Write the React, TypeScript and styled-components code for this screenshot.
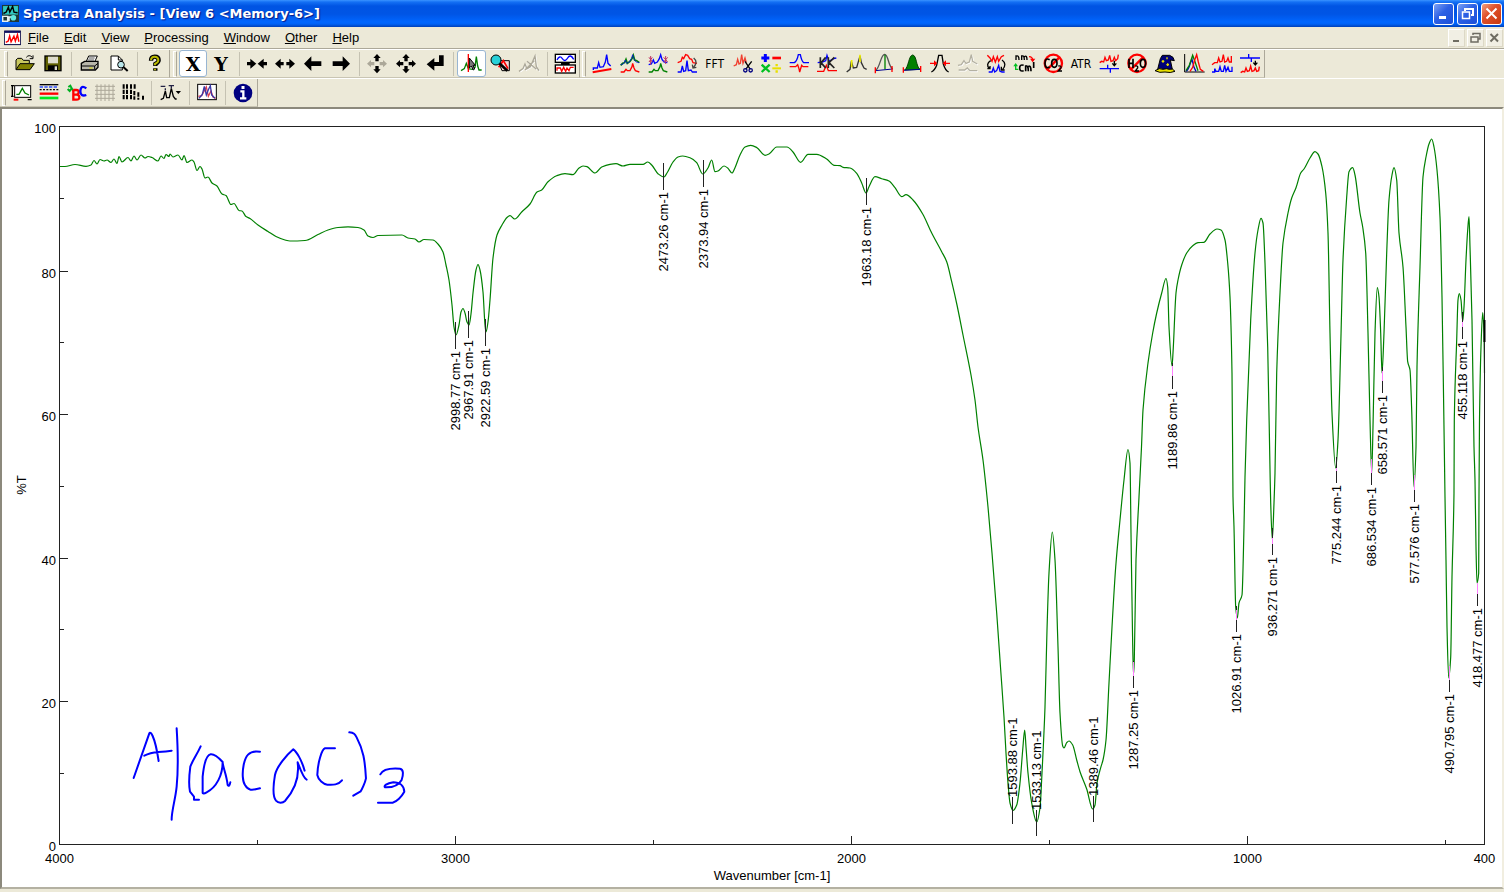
import React from "react";
import styled, { createGlobalStyle } from "styled-components";

const FACE = "#ece9d8";
const SANS = '"Liberation Sans", Arial, sans-serif';

const GlobalStyle = createGlobalStyle`
  *, *::before, *::after { box-sizing: border-box; }
  body { margin: 0; background: ${FACE}; font-family: ${SANS}; font-size: 13px; color: #000; }
  button { font: inherit; color: inherit; }
`;

const AppWindow = styled.main`
  display: flex;
  flex-direction: column;
  padding-bottom: 3px;
  background: ${FACE};
`;

const TitleBar = styled.header`
  display: flex;
  align-items: center;
  gap: 4px;
  height: 27px;
  padding: 0 2px;
  background: linear-gradient(#3a93ff 0, #1470f4 2px, #0054e3 6px, #0055e5 14px, #0066ff 22px, #0062f6 24px, #0040b8 27px);
`;

const WindowTitle = styled.h1`
  flex: 1;
  margin: 0;
  font: bold 13px/20px "DejaVu Sans", Verdana, sans-serif;
  color: #fff;
  text-shadow: 1px 1px 1px #0a1883;
`;

const CaptionButtons = styled.div`
  display: flex;
  gap: 3px;
`;

const CaptionButton = styled.button<{ $close?: boolean }>`
  display: grid;
  place-items: center;
  width: 21px;
  height: 22px;
  padding: 0;
  border: 1px solid #fff;
  border-radius: 3px;
  background: ${(p) =>
    p.$close
      ? "linear-gradient(135deg, #f0a080, #e0522c 40%, #c8390f)"
      : "linear-gradient(135deg, #7da2f5, #2c60e4 45%, #1c4fd8)"};
`;

const MenuBar = styled.nav`
  display: flex;
  align-items: center;
  height: 22px;
  padding: 0 1px 0 4px;
  border-bottom: 1px solid #aca899;
`;

const MenuItems = styled.div`
  display: flex;
  flex: 1;
  gap: 15px;
  padding-left: 7px;
`;

const MenuItem = styled.button`
  padding: 0;
  border: 0;
  background: none;
  line-height: 18px;
`;

const ChildButtons = styled.div`
  display: flex;
  gap: 2px;
`;

const ChildButton = styled.button`
  display: grid;
  place-items: center;
  width: 17px;
  height: 18px;
  padding: 0;
  border: 1px solid #fff;
  border-color: #fff #dcd8c6 #dcd8c6 #fff;
  background: #f1efe4;
`;

const ToolRow = styled.div`
  display: flex;
  align-items: center;
  height: 29px;
  border-top: 1px solid #fff;
`;

const ToolBar = styled.div`
  display: flex;
  align-items: center;
  height: 28px;
  border-right: 1px solid #aca899;
  border-bottom: 1px solid #c9c5b3;
`;

const Grip = styled.span<{ $width: number }>`
  display: flex;
  justify-content: center;
  width: ${(p) => p.$width}px;
  height: 26px;
  &::before {
    content: "";
    width: 4px;
    border: 1px solid #fff;
    border-right-color: #aca899;
  }
`;

const Separator = styled.span`
  width: 1px;
  height: 24px;
  margin: 0 3px 0 4px;
  background: #c5c2b2;
`;

const Group = styled.div<{ $count: number; $width: number }>`
  display: grid;
  grid-template-columns: repeat(${(p) => p.$count}, 1fr);
  width: ${(p) => p.$width}px;
`;

const ToolButton = styled.button<{ $pressed?: boolean }>`
  display: grid;
  place-items: center;
  height: 27px;
  padding: 0;
  border: 1px solid ${(p) => (p.$pressed ? "#98b5d2" : "transparent")};
  border-radius: 3px;
  background: ${(p) => (p.$pressed ? "#fff" : "none")};
`;

const Glyph = styled.svg`
  display: block;
  width: 20px;
  height: 20px;
  overflow: visible;
  fill: none;
  stroke-width: 4;
`;

const AxisLetter = styled.span`
  font: bold 19px/20px "DejaVu Serif", serif;
`;

const TextIcon = styled.span`
  font: 12px/20px "DejaVu Sans Condensed", "Liberation Sans Narrow", sans-serif;
`;

const Pane = styled.section`
  border: 2px solid #8c897c;
  border-right: 2px solid #f1eee0;
  border-bottom: 2px solid #b4b1a2;
  background: #fff;
`;

const Chart = styled.svg`
  display: block;
  width: 100%;
  height: auto;
  font: 13px ${SANS};
`;

/* ---------- toolbar drawings, on a 60 x 60 grid ---------- */

const K = "#000";
const R = "#ff0000";
const B = "#0000ff";
const G = "#008000";

const PEAKS_TOP = "M2 32 L10 30 L16 18 L20 28 L28 24 L34 14 L38 2 L42 16 L48 24 L58 26";
const PEAKS_LOW = "M2 54 L12 54 L18 46 L22 50 L30 50 L36 38 L38 28 L42 42 L46 50 L58 54";
const NOISE_TOP = "M2 26 L8 22 L14 24 L18 10 L22 20 L28 18 L32 4 L36 22 L42 20 L46 10 L50 20 L56 14 L58 2";
const NOISE_LOW = "M2 56 L8 52 L14 54 L18 42 L22 52 L28 50 L32 36 L36 52 L42 50 L46 42 L50 52 L56 50 L58 38";
const UP = "M30 0 L41 12 H35 V22 H25 V12 H19Z";
const DOWN = "M30 58 L41 46 H35 V36 H25 V46 H19Z";
const LEFT = "M0 29 L12 18 V24 H22 V34 H12 V40Z";
const RIGHT = "M60 29 L48 18 V24 H38 V34 H48 V40Z";

const drawings: Record<string, React.ReactNode> = {
  open: (
    <>
      <path d="M3 46 V18 L8 13 H20 L25 19 H43 V28" fill="#c8c860" stroke={K} strokeWidth="3" />
      <path d="M3 47 L15 29 H58 L45 47Z" fill="#808000" stroke={K} strokeWidth="3" />
      <path d="M34 10 Q42 0 52 10 M54 4 V14 H44" stroke={K} strokeWidth="3" />
    </>
  ),
  save: (
    <>
      <rect x="6" y="6" width="48" height="44" fill="#606000" stroke={K} />
      <rect x="15" y="8" width="30" height="20" fill="#dedccc" />
      <rect x="15" y="34" width="30" height="15" fill={K} />
      <rect x="35" y="37" width="7" height="11" fill="#dedccc" />
    </>
  ),
  print: (
    <>
      <path d="M18 24 L26 6 H52 L44 24Z" fill="#fff" stroke={K} strokeWidth="3" />
      <path d="M26 12 H44 M23 18 H42" stroke={K} strokeWidth="2" />
      <path d="M4 28 L14 22 H54 V40 L46 48 H4Z" fill="#b8b6aa" stroke={K} strokeWidth="4" />
      <path d="M4 36 H44 L54 28 M44 36 V46" stroke={K} strokeWidth="3" />
      <path d="M28 42 H38" stroke="#d8d800" strokeWidth="3" />
    </>
  ),
  preview: (
    <>
      <path d="M6 6 H28 L40 18 V48 H6Z" fill="#fff" stroke={K} strokeWidth="3" />
      <path d="M28 6 V18 H40" stroke={K} strokeWidth="3" />
      <circle cx="36" cy="32" r="10" fill="#b9e6ea" stroke={K} strokeWidth="3" />
      <path d="M43 39 L56 51" stroke={K} strokeWidth="6" />
    </>
  ),
  help: (
    <>
      <path d="M18 20 Q18 8 29 8 Q41 8 41 19 Q41 25 31 30 V36 M31 43 V50" stroke={K} strokeWidth="13" />
      <path d="M18 19 Q18 8 29 8 Q40 8 40 19 Q40 25 30 30 V34 M30 44 V49" stroke="#b8b800" strokeWidth="6" />
    </>
  ),
  squeezeX: <path fill={K} d="M0 24 H10 V14 L28 29 L10 44 V34 H0Z M60 24 H50 V14 L32 29 L50 44 V34 H60Z" />,
  stretchX: <path fill={K} d="M0 29 L17 14 V24 H26 V34 H17 V44Z M60 29 L43 14 V24 H34 V34 H43 V44Z" />,
  left: <path fill={K} d="M3 29 L25 7 V22 H55 V36 H25 V51Z" />,
  right: <path fill={K} d="M57 29 L35 7 V22 H5 V36 H35 V51Z" />,
  panY: (
    <>
      <path fill="#aca899" d={LEFT + RIGHT} />
      <path fill={K} d={UP + DOWN} />
    </>
  ),
  panAll: <path fill={K} d={UP + DOWN + LEFT + RIGHT} />,
  enter: <path fill={K} d="M56 4 V36 H28 V50 L5 31 L28 12 V24 H42 V4Z" />,
  pick: (
    <>
      <path d="M0 50 L10 44 L16 28 L22 44 L34 46 L42 40 L46 8 L50 36 L54 48 H62" stroke={G} />
      <path d="M22 0 V54" stroke={R} />
      <path d="M25 12 V42 L31 36 L37 48 L41 45 L36 34 H43Z" fill="#777" stroke={K} strokeWidth="3" />
    </>
  ),
  zoomArea: (
    <>
      <path d="M24 20 H58 V50 H36Z" fill="#f4d8d8" stroke={K} strokeWidth="3" />
      <path d="M26 40 L40 20 L54 44" stroke={R} strokeWidth="5" />
      <path d="M28 28 L52 50" stroke={K} strokeWidth="8" />
      <circle cx="18" cy="18" r="15" fill="#28d0d8" stroke={K} strokeWidth="3" />
    </>
  ),
  pickOff: (
    <>
      <path d="M4 54 L14 46 L20 32 L26 46 L36 40 L50 8 L54 40 L62 52 M20 50 L48 22 M26 24 L54 48" stroke="#fff" />
      <path d="M0 52 L12 44 L18 30 L24 44 L34 38 L48 6 L52 38 L60 50 M18 48 L46 20 M24 22 L52 46" stroke="#aca899" />
    </>
  ),
  split: (
    <>
      <rect x="1" y="1" width="60" height="24" fill="#fff" stroke={K} />
      <rect x="1" y="33" width="60" height="24" fill="#fff" stroke={K} />
      <path d="M18 25 H44 V33 H18Z" fill={K} />
      <path d="M6 18 Q14 2 22 14 T38 12 T56 16" stroke={B} />
      <path d="M6 50 V42 H16 L20 52 L26 40 L32 52 L36 42 L42 50 L46 40 H56" stroke={R} />
    </>
  ),
  baseline: (
    <>
      <path d="M4 48 V42 H16 L20 26 L24 40 L34 38 L40 24 L44 2 L48 28 L56 36" stroke={B} />
      <path d="M2 55 L58 45" stroke={R} strokeWidth="6" />
    </>
  ),
  smooth: (
    <>
      <path d="M2 34 L8 28 L14 26 L18 16 L22 28 L30 22 L36 14 L40 4 L44 18 L50 20 L58 26" stroke={G} strokeWidth="5" />
      <path d={PEAKS_TOP} stroke={B} strokeWidth="2" />
      <path d={PEAKS_LOW} stroke={R} />
    </>
  ),
  truncate: (
    <>
      <path d={PEAKS_TOP} stroke={B} />
      <path d="M3 10 L13 24 M13 10 L3 24 M8 6 V32 M47 10 L59 24 M59 10 L47 24 M53 6 V30" stroke="#c03060" strokeWidth="3" />
      <path d={PEAKS_LOW} stroke={G} />
    </>
  ),
  convert: (
    <>
      <path d="M2 26 L12 22 L16 10 L20 14 L26 2 L32 4 L38 14 L44 16 L48 26 L60 28" stroke={R} />
      <path d="M50 12 Q64 24 50 40 M46 32 L48 42 L58 40" stroke="#444" />
      <path d="M2 54 H12 L16 36 L20 52 L26 50 L30 20 L34 50 L42 48 L46 54 H60" stroke={B} />
    </>
  ),
  cut: (
    <>
      <path d="M2 36 L10 32 L14 16 L18 30 L22 28 L26 2 L30 28 L36 12 L40 26" stroke="#f04030" />
      <path d="M36 22 L52 46 M56 22 L38 46" stroke={K} />
      <circle cx="37" cy="49" r="5" stroke="#000080" />
      <circle cx="53" cy="49" r="5" stroke="#000080" />
    </>
  ),
  math: (
    <>
      <path d="M13 0 V24 M1 12 H25" stroke={B} strokeWidth="9" />
      <path d="M34 12 H60" stroke={R} strokeWidth="8" />
      <path d="M2 32 L26 54 M26 32 L2 54" stroke="#00c020" strokeWidth="7" />
      <path d="M34 43 H60" stroke="#e8e000" strokeWidth="6" />
      <path d="M47 30 V37 M47 49 V56" stroke="#e8e000" strokeWidth="7" />
    </>
  ),
  derive: (
    <>
      <path d="M2 26 H16 Q24 22 28 2 H34 Q38 22 44 26 H60" stroke={B} />
      <path d="M2 38 H20 L26 32 L30 44 L32 54 L38 34 L42 38 H58" stroke={R} />
    </>
  ),
  kk: (
    <>
      <path d="M2 26 L16 24 L26 20 L30 4 L36 22 L50 14 L58 12" stroke={B} />
      <path d="M0 52 H20 L28 34 L34 50 H60" stroke={R} />
      <path d="M10 10 V42 M26 10 L12 26 L26 42 M34 10 V42 M52 10 L36 26 L52 42" stroke="#222" strokeWidth="5" />
    </>
  ),
  peakFind: (
    <>
      <path d="M2 54 L12 46 L16 22 L22 42 L32 40 L38 20 L42 6 L46 26 L54 42 L62 46" stroke="#333" />
      <path d="M17 18 V40 M42 2 V24" stroke="#f0f000" strokeWidth="5" />
    </>
  ),
  peakHeight: (
    <>
      <path d="M6 48 C18 40 20 2 32 1 C44 2 42 38 56 44" stroke="#555" />
      <path d="M33 2 V46" stroke={G} />
      <path d="M4 50 L56 45" stroke="#000090" strokeWidth="3" />
      <path d="M4 40 V58 M54 36 V54" stroke={R} />
    </>
  ),
  peakArea: (
    <>
      <path d="M8 48 C20 40 20 4 32 3 C44 4 42 38 54 46Z" fill={G} stroke="#004000" strokeWidth="3" />
      <path d="M4 49 L56 46" stroke="#000090" strokeWidth="3" />
      <path d="M4 40 V56 M56 36 V54" stroke={R} />
    </>
  ),
  fwhm: (
    <>
      <path d="M4 54 Q14 50 20 34 L26 4 H36 L40 30 Q46 50 56 54" stroke={K} />
      <path d="M0 28 H14 M60 28 H46" stroke={R} />
      <path d="M12 19 L22 28 L12 37Z M48 19 L38 28 L48 37Z" fill={R} />
    </>
  ),
  ghost: (
    <>
      <path d="M2 36 L12 34 L20 22 L26 30 L36 26 L42 4 L46 24 L60 32 M4 50 H22 L30 44 L38 52 H60" stroke="#fff" strokeWidth="5" />
      <path d="M0 34 L10 32 L18 20 L24 28 L34 24 L40 2 L44 22 L58 30 M2 48 H20 L28 42 L36 50 H58" stroke="#b4b1a2" />
    </>
  ),
  swap: (
    <>
      <path d="M4 4 L12 12 L18 22 L22 8 L28 24 L34 8 L38 22 L46 8 L54 4" stroke={R} />
      <path d="M8 54 H18 L22 42 L26 54 L32 50 L38 34 L42 52 L48 54 H56" stroke={B} />
      <path d="M14 20 Q-2 30 10 44 M4 44 H12 V36 M48 18 Q64 30 50 46 M46 38 V48 H56" stroke={K} />
    </>
  ),
  units: (
    <>
      <path d="M3 18 V4 M3 7 Q12 2 12 18 M20 18 V4 M20 7 Q28 2 28 18 M28 8 Q36 2 36 18" stroke={K} />
      <path d="M42 8 Q53 8 53 20" stroke={R} />
      <path d="M45 14 H61 L53 25Z" fill={R} />
      <path d="M2 34 V46 H10" stroke="#00c020" />
      <path d="M-5 37 H9 L2 27Z" fill="#00c020" />
      <path d="M26 34 Q14 30 14 42 Q14 54 26 50 M32 52 V34 M32 37 Q40 32 40 52 M40 38 Q48 32 48 52 M56 24 V42" stroke={K} strokeWidth="5" />
    </>
  ),
  co2: (
    <>
      <circle cx="31" cy="28" r="26" stroke={R} strokeWidth="7" />
      <path d="M49 10 L13 46" stroke={R} strokeWidth="7" />
      <path d="M20 17 Q6 10 6 28 Q6 46 20 39" stroke={K} strokeWidth="5" />
      <ellipse cx="34" cy="28" rx="8" ry="12" stroke={K} strokeWidth="5" />
      <path d="M46 36 Q56 34 54 42 L46 51 H57" stroke={K} />
    </>
  ),
  subtract: (
    <>
      <path d={NOISE_TOP} stroke={R} />
      <path d="M2 44 H26 V32 M34 56 V44 H60 M26 44 H34" stroke={B} />
      <path d="M46 20 V34 M40 28 L46 35 L52 28" stroke={K} />
    </>
  ),
  h2o: (
    <>
      <circle cx="30" cy="28" r="26" stroke={R} strokeWidth="7" />
      <path d="M48 10 L12 46" stroke={R} strokeWidth="7" />
      <path d="M6 14 V42 M18 14 V42 M6 28 H18" stroke={K} strokeWidth="5" />
      <ellipse cx="48" cy="28" rx="8" ry="12" stroke={K} strokeWidth="5" />
      <path d="M25 36 Q34 34 32 42 L25 51 H36" stroke={K} />
    </>
  ),
  wizard: (
    <>
      <path d="M8 46 L16 14 L22 4 H44 L54 10 L58 20 L46 18 L52 46Z" fill="#000078" stroke={K} strokeWidth="3" />
      <path d="M0 50 Q14 40 24 46 Q36 42 42 46 Q54 42 60 52 Q46 58 30 54 Q14 58 0 50Z" fill="#e8e000" stroke={K} strokeWidth="3" />
      <path d="M24 18 V26 M20 22 H28 M38 28 V36 M34 32 H42 M36 10 V16" stroke="#e8e000" />
    </>
  ),
  overlay: (
    <>
      <path d="M2 0 V54 H62" stroke={K} strokeWidth="3" />
      <path d="M6 52 Q14 46 18 30 L24 16 L30 40 L36 52" stroke="#0000c0" />
      <path d="M6 50 L16 34 L26 4 L32 20 L42 50" stroke={G} />
      <path d="M18 52 L26 40 L32 18 L38 2 L43 24 L49 46 L58 52" stroke={R} />
    </>
  ),
  stack: (
    <>
      <path d="M0 32 L8 26 H16 L20 12 L24 24 L30 22 L34 2 L38 24 L44 22 L48 12 L52 24 H58 V6" stroke={R} />
      <path d="M0 54 H8 V44 L12 52 H20 L24 38 L28 52 H34 L38 34 L42 52 L48 40 L52 52 H60 V38" stroke={B} />
    </>
  ),
  correct: (
    <>
      <path d="M0 12 H26 V0 M34 24 V12 H60 M26 12 H34" stroke={B} />
      <path d="M46 20 V32 M40 26 L46 33 L52 26" stroke={K} />
      <path d={NOISE_LOW} stroke={R} />
    </>
  ),
  scale: (
    <>
      <rect x="11" y="8" width="48" height="35" fill="#fff" stroke={K} strokeWidth="3" />
      <path d="M16 34 L24 34 L34 16 L42 30 L54 36" stroke={G} />
      <path d="M0 8 H10 M4 8 V40 M0 40 H8 M50 50 H62" stroke={K} />
      <path d="M8 50 H22" stroke={R} strokeWidth="6" />
    </>
  ),
  lineStyle: (
    <>
      <path d="M2 5 H58" stroke={K} />
      <path d="M2 12 H58" stroke="#3050ff" strokeDasharray="10 4" />
      <path d="M2 20 H58" stroke={K} strokeDasharray="6 4" />
      <path d="M2 32 H58" stroke={R} strokeWidth="7" />
      <path d="M2 45 H58" stroke="#00e820" strokeWidth="8" />
    </>
  ),
  fonts: (
    <>
      <path d="M4 12 L10 8 L14 16 L8 24 L2 18 M14 16 L20 24" stroke="#00b020" strokeWidth="6" />
      <path d="M19 20 V50 H28 Q38 50 37 42 Q36 35 28 35 H20 M19 21 H28 Q36 21 35 28 Q34 35 28 35" stroke={R} strokeWidth="7" />
      <path d="M58 16 Q42 4 40 24 Q40 42 58 36" stroke={B} strokeWidth="7" />
    </>
  ),
  grid: <path d="M6 4 V54 M18 4 V54 M30 4 V54 M42 4 V54 M54 4 V54 M0 10 H60 M0 22 H60 M0 34 H60 M0 46 H60" stroke="#aca899" strokeWidth="3" />,
  bars: (
    <path d="M2 4 V50 M12 4 V50 M24 4 V50 M35 4 V18 M34 24 V50 M46 28 V50 M60 38 V50" stroke={K} strokeWidth="6" strokeDasharray="13 3" />
  ),
  peakMenu: (
    <>
      <path d="M2 50 L10 46 L16 24 L20 44 L28 44 L34 16 L40 40 L46 48 H50" stroke={K} />
      <path d="M2 10 H16 M26 8 H42 M16 16 V22 M34 10 V16" stroke="#224" strokeWidth="4" />
      <path d="M47 24 H63 L55 33Z" fill={K} />
    </>
  ),
  viewPeaks: (
    <>
      <rect x="2" y="4" width="56" height="46" fill="#fff" stroke={K} strokeWidth="3" />
      <path d="M4 40 L14 38 L28 12 L34 40 L42 24 L48 42 L56 46" stroke="#e04050" />
      <path d="M6 46 L16 34 L22 10 L28 36 L34 20 L40 8 L44 36 L54 46" stroke="#3838a8" />
    </>
  ),
  info: (
    <>
      <circle cx="30" cy="30" r="28" fill="#000080" />
      <path d="M30 9 V18" stroke="#fff" strokeWidth="9" />
      <path d="M22 25 H31 V44 M21 46 H40" stroke="#fff" strokeWidth="7" />
    </>
  ),
};

type Tool = { id: string; label: string; text?: string; letter?: string; pressed?: boolean };

const t = (id: string, label: string): Tool => ({ id, label });

const fileTools = [t("open", "Open"), t("save", "Save")];
const printTools = [t("print", "Print"), t("preview", "Print preview")];
const helpTools = [t("help", "Help")];
const axisTools: Tool[] = [
  { id: "x", label: "X axis", letter: "X", pressed: true },
  { id: "y", label: "Y axis", letter: "Y" },
];
const rangeTools = [t("squeezeX", "Compress"), t("stretchX", "Expand"), t("left", "Move left"), t("right", "Move right")];
const panTools = [t("panY", "Vertical pan"), t("panAll", "Auto scale"), t("enter", "Previous scale")];
const pickTools: Tool[] = [{ id: "pick", label: "Cursor", pressed: true }, t("zoomArea", "Zoom"), t("pickOff", "Edit peak")];
const splitTools = [t("split", "Split view")];
const processTools: Tool[] = [
  t("baseline", "Baseline"),
  t("smooth", "Smoothing"),
  t("truncate", "Deresolution"),
  t("convert", "Y conversion"),
  { id: "fft", label: "FFT", text: "FFT" },
  t("cut", "Cut"),
  t("math", "Arithmetic"),
  t("derive", "Derivatives"),
  t("kk", "Kramers-Kronig"),
  t("peakFind", "Peak find"),
  t("peakHeight", "Peak height"),
  t("peakArea", "Peak area"),
  t("fwhm", "Peak width"),
  t("ghost", "Peak process"),
  t("swap", "Exchange"),
  t("units", "Unit conversion"),
  t("co2", "CO2 reduction"),
  { id: "atr", label: "ATR", text: "ATR" },
  t("subtract", "Subtraction"),
  t("h2o", "H2O reduction"),
  t("wizard", "Wizard"),
  t("overlay", "Overlay"),
  t("stack", "Stack"),
  t("correct", "Correction"),
];
const styleTools = [t("scale", "Scale"), t("lineStyle", "Line style"), t("fonts", "Font"), t("grid", "Grid"), t("bars", "Pattern")];

function Tools({ items, width }: { items: Tool[]; width: number }) {
  return (
    <Group $count={items.length} $width={width}>
      {items.map((item) => (
        <ToolButton key={item.id} type="button" aria-label={item.label} $pressed={item.pressed}>
          {item.letter ? (
            <AxisLetter>{item.letter}</AxisLetter>
          ) : item.text ? (
            <TextIcon>{item.text}</TextIcon>
          ) : (
            <Glyph viewBox="0 0 60 60" aria-hidden="true">{drawings[item.id]}</Glyph>
          )}
        </ToolButton>
      ))}
    </Group>
  );
}

/* ---------- spectrum ---------- */

const spectrum =
  "60,166.5 65,166.5 75,164.5 86,166.3 91,165 94,160.5 97,164 100,159.5 104,161 107,160 111,162.5 114,159 117,163.5 119,156.5 122,162 128,157.5 131,161 134,156 137,160 141,155 145,158 148,156.5 152,157.5 158,161 161,156 164,158.5 166,154.5 169,156.5 170,154 173,157 178,155 182,160 184,155.5 187,162.5 192,160 194,162 197,170.5 200,166.5 202,169 205,178 208,177 212,183 217,186 222,194 226,195.5 231,204.5 234,203.5 239,210.5 242,211 246,216.5 250,218.5 258,225 268,231.5 276,236.5 285,240 290,241 305,240.5 318,234.5 328,230 338,227.5 348,226.8 358,227.5 364,230 368,236 373,237.5 378,235.5 402,235 408,238 415,239 419,242 424,239.5 433,240 438,244 443,252 446,265 449,280 452,305 454,327 456,335 459,325 461,312 463,308.5 465,313 467,322 469,325 471,314 473,293 476,270 478,264.5 480,270 483,292 485,325 486,332 488,322 490,300 493,258 497,235 502,225 507,217.5 510,215.7 514.7,219 521.7,212 530,204 537,192 541.7,190 548,181.7 556.7,175.7 565,173.7 573,174.7 579,168 583,166 587,166.7 595,173 601.7,167 610,164.3 616,163.7 623,166 630,164.3 643,164.3 647.7,162 651.7,165 658,173.7 664,177 667,173 673,162 678,157 682.7,156 690,157.7 696.7,162.7 702.7,174 708,168 711.7,160 715,171.7 718,171 724,166 727.7,168 732,173 735,167.7 740,155 745,147 750.7,145.3 757,147.7 765,155.3 769,154 776.7,147 787,147 793,152 800.7,162.3 808,154.3 816.7,154.3 826.7,159 834,165.3 840,165.7 843,167.3 850,168 856.7,173.3 861.7,183 866,193 869,186.7 875,176.7 881.7,178.7 889,181 895,187.7 901.7,196.7 906,194.7 913,200 922.7,214 931.7,233 941.7,251.7 946.7,261.7 951.7,281.7 957,305 963,335 971,375 975,400 978,427 983,460 988,507 992,553 996.7,613 1000.7,670 1004,717 1006,753 1008,783 1010,803 1013,810.5 1016.7,805 1020,783 1022.7,750 1024.7,730 1026,747 1028,773 1031.7,803 1036.7,822 1040,808 1042,773 1045,707 1047,630 1049,573 1052.3,532 1055,560 1058,647 1060,713 1062.7,746 1064,748 1066.7,742.7 1069,741 1072.7,745 1076.7,760 1080,771.7 1086.7,789 1092.7,809 1095,805 1097,783 1101,766.7 1103,760 1106,740 1109,683 1112,627 1115.7,567 1120,520 1124,480 1128,449.5 1130,463 1131,533 1132.5,633 1133.5,675 1134.3,660 1136,560 1139,497 1141.5,447 1143,410 1148,363 1152.7,333 1156.7,313 1161.7,293 1166,278.5 1167.7,287 1169,327 1172,366 1173,353 1176,293 1178,280 1181.7,265 1186.7,253 1192.7,245.7 1198,242.7 1204,242.3 1210,234 1217,229 1221,230 1225,240 1227.7,263 1230,297 1232,373 1233,497 1234,527 1235.7,607 1237.3,618 1239,603 1242,595 1244,527 1245,477 1246.7,420 1250.7,320 1255,253 1258,230 1261,218.3 1263,223 1265,263 1267.7,347 1270.2,480 1270.7,503 1272.3,539 1274,503 1275,473 1276.7,373 1280,293 1283,243 1288,213 1291.7,198 1296,187.7 1300.7,173 1304,169 1310,158 1315,151.7 1318,154 1322,166.7 1325.7,193 1328,233 1330,333 1332,413 1335.7,468 1338,440 1340.7,347 1343,260 1346.7,197 1349,171.7 1352.7,167.7 1355,175 1360,213 1362.7,227 1365.7,253 1368,333 1370,420 1371.7,473 1373,427 1375,333 1377.3,287.7 1379,297 1380.7,333 1382,373 1384,333 1386.7,253 1389,200 1392,175 1394,167.7 1396.7,180 1399,233 1403,267 1406,327 1407.7,361.7 1410,370 1411.7,410 1414,487 1416,447 1417,367 1420,267 1423,177 1426,157 1429,144 1431.7,139 1434,147 1437,170 1440,217 1442,297 1443.7,407 1445,497 1446,560 1447,627 1448.7,678 1450.7,657 1452,577 1454,493 1454.3,420 1456.7,340 1458,300 1459.3,293.7 1461,300 1462.7,321 1464,307 1466,260 1467.7,230 1469,216.7 1470,247 1472,320 1474,447 1475,480 1476,547 1477,583 1478.7,573 1479,493 1479.5,420 1481,347 1482.7,312.7 1484,333 1484.5,373";

/* Monotone cubic interpolation: smooth between samples, with no overshoot at a peak. */
function smoothPath(points: string): string {
  const p = points.split(" ").map((pair) => pair.split(",").map(Number));
  const n = p.length;
  const slope = (i: number) => (p[i + 1][1] - p[i][1]) / (p[i + 1][0] - p[i][0]);
  const tangent = p.map((_, i) => {
    if (i === 0) return slope(0);
    if (i === n - 1) return slope(n - 2);
    const a = slope(i - 1);
    const b = slope(i);
    return a * b <= 0 ? 0 : (2 * a * b) / (a + b);
  });
  let d = `M${p[0][0]} ${p[0][1]}`;
  for (let i = 0; i < n - 1; i++) {
    const h = (p[i + 1][0] - p[i][0]) / 3;
    const c1 = [p[i][0] + h, p[i][1] + tangent[i] * h];
    const c2 = [p[i + 1][0] - h, p[i + 1][1] - tangent[i + 1] * h];
    d += `C${c1.map((v) => v.toFixed(2)).join(" ")} ${c2.map((v) => v.toFixed(2)).join(" ")} ${p[i + 1].join(" ")}`;
  }
  return d;
}

const spectrumPath = smoothPath(spectrum);

type Peak = { label: string; x: number; top: number; bottom: number; pink?: [number, number]; above?: boolean };

const peaks: Peak[] = [
  { label: "2998.77", x: 455.5, top: 322, bottom: 349 },
  { label: "2967.91", x: 468.5, top: 311, bottom: 338 },
  { label: "2922.59", x: 485.5, top: 319, bottom: 346 },
  { label: "2473.26", x: 663.5, top: 163, bottom: 190 },
  { label: "2373.94", x: 703.5, top: 160, bottom: 187 },
  { label: "1963.18", x: 866.5, top: 178, bottom: 205 },
  { label: "1593.88", x: 1012.5, top: 797, bottom: 824, above: true },
  { label: "1533.13", x: 1036.5, top: 810, bottom: 836, above: true },
  { label: "1389.46", x: 1093.5, top: 796, bottom: 822, above: true },
  { label: "1287.25", x: 1133.5, top: 661, bottom: 688, pink: [662, 676] },
  { label: "1189.86", x: 1172.5, top: 363, bottom: 389, pink: [366, 376] },
  { label: "1026.91", x: 1236.5, top: 606, bottom: 632, pink: [610, 620] },
  { label: "936.271", x: 1272.5, top: 528, bottom: 555, pink: [538, 544] },
  { label: "775.244", x: 1336.5, top: 457, bottom: 483, pink: [468, 471] },
  { label: "686.534", x: 1371.5, top: 459, bottom: 485, pink: [459, 473] },
  { label: "658.571", x: 1382.5, top: 367, bottom: 393, pink: [371, 381] },
  { label: "577.576", x: 1414.5, top: 475, bottom: 502, pink: [475, 490] },
  { label: "455.118", x: 1462.5, top: 312, bottom: 339, pink: [322, 327] },
  { label: "490.795", x: 1449.5, top: 666, bottom: 692, pink: [666, 680] },
  { label: "418.477", x: 1477.5, top: 583, bottom: 606, pink: [583, 594] },
];

const yTicks = [
  { value: 100, y: 126.5 },
  { value: 80, y: 271.5 },
  { value: 60, y: 414.5 },
  { value: 40, y: 558.5 },
  { value: 20, y: 701.5 },
  { value: 0, y: 844.5 },
];

const xTicks = [
  { value: 4000, x: 59.5 },
  { value: 3000, x: 455.5 },
  { value: 2000, x: 851.5 },
  { value: 1000, x: 1247.5 },
  { value: 400, x: 1484.5 },
];

function PeakMark({ peak }: { peak: Peak }) {
  const labelX = peak.x + 4;
  const labelY = peak.above ? peak.top : peak.bottom + 2;
  return (
    <g>
      <path d={`M${peak.x} ${peak.top} V${peak.bottom}`} stroke="#222" />
      {peak.pink && <path d={`M${peak.x} ${peak.pink[0]} V${peak.pink[1]}`} stroke="#ff80ff" />}
      <text transform={`translate(${labelX} ${labelY}) rotate(-90)`} textAnchor={peak.above ? "start" : "end"}>
        {peak.label} cm-1
      </text>
    </g>
  );
}

function SpectrumChart() {
  return (
    <Chart viewBox="2 109 1500 778" role="img" aria-label="Infrared transmittance spectrum">
      <path d={spectrumPath} fill="none" stroke="#008000" strokeWidth="1.2" strokeLinejoin="round" />
      <rect x="59.5" y="126.5" width="1425" height="718" fill="none" stroke="#222" />
      <path
        d="M60 198.5 h4 M60 342.5 h4 M60 486.5 h4 M60 629.5 h4 M60 773.5 h4 M257.5 844 v-4 M653.5 844 v-4 M1049.5 844 v-4 M1445.5 844 v-4"
        stroke="#222"
      />
      {yTicks.map(({ value, y }) => (
        <g key={value}>
          <path d={`M60 ${y} h8`} stroke="#222" />
          <text x="56" y={y + 6} textAnchor="end">{value}</text>
        </g>
      ))}
      {xTicks.map(({ value, x }) => (
        <g key={value}>
          <path d={`M${x} 844 v-8`} stroke="#222" />
          <text x={x} y="863" textAnchor="middle">{value}</text>
        </g>
      ))}
      <path d="M1484.5 320 V342" stroke="#000" strokeWidth="2" />
      <text x="772" y="880" textAnchor="middle">Wavenumber [cm-1]</text>
      <text transform="translate(26 485) rotate(-90)" textAnchor="middle">%T</text>
      {peaks.map((peak) => (
        <PeakMark key={peak.label} peak={peak} />
      ))}
      <g
        transform="translate(0 700) scale(0.3333)"
        fill="none"
        stroke="#0000ff"
        strokeWidth="6"
        strokeLinecap="round"
        strokeLinejoin="round"
      >
        <path d="M401 234 L448 100 Q452 94 458 108 Q468 130 476 183 M433 167 Q450 158 475 156 T515 152" />
        <path d="M530 85 C534 150 534 220 530 260 C526 300 515 330 515 359" />
        <path d="M602 139 C590 165 576 185 571 200 C567 230 567 260 570 275 L582 290 V299 H597" />
        <path d="M668 186 C655 172 640 162 632 163 C620 165 612 190 608 230 V278 Q608 284 620 277 C650 262 668 225 668 186 C668 200 680 225 683 255 Q688 262 691 247" />
        <path d="M780 155 C745 150 736 170 731 195 C726 220 728 245 735 255 C745 272 755 272 780 265" />
        <path d="M914 212 C905 180 890 155 880 148 C860 165 830 200 825 225 C820 255 818 290 828 302 C835 310 848 310 855 303 C880 275 900 240 893 187 C900 205 910 235 920 239" />
        <path d="M1005 145 H975 C965 148 953 190 952 225 C955 240 970 253 982 254 C1000 255 1015 255 1026 241" />
        <path d="M1048 97 C1062 98 1065 102 1070 112 C1090 150 1095 180 1098 235 C1095 250 1085 270 1082 274 L1060 287" />
        <path d="M1141 223 C1150 205 1175 204 1200 206 C1212 208 1210 225 1205 240 C1195 258 1180 263 1155 262 C1150 258 1160 250 1180 247 C1200 247 1212 258 1213 275 C1205 290 1190 305 1178 308 H1134" />
      </g>
    </Chart>
  );
}

const menus = ["File", "Edit", "View", "Processing", "Window", "Other", "Help"];

const SmallIcon = styled.svg`
  display: block;
  width: 17px;
  height: 17px;
  fill: none;
`;

function ControlGlyph({ kind, color }: { kind: "min" | "restore" | "close"; color: string }) {
  return (
    <svg width="13" height="13" viewBox="0 0 13 13" fill="none" stroke={color} strokeWidth="2" aria-hidden="true">
      {kind === "min" && <path d="M2 10.500 H9" strokeWidth="3" />}
      {kind === "restore" && (
        <>
          <path d="M4 4 V2 H12 V8 H10" />
          <path d="M1.500 5 H8.500 V11.500 H1.500Z" strokeWidth="1.500" />
        </>
      )}
      {kind === "close" && <path d="M1.500 1.500 L11.500 11.500 M11.500 1.500 L1.500 11.500" />}
    </svg>
  );
}

function SmallControlGlyph({ kind }: { kind: "min" | "restore" | "close" }) {
  return (
    <svg width="11" height="11" viewBox="0 0 11 11" fill="none" stroke="#6e6c62" strokeWidth="2" aria-hidden="true">
      {kind === "min" && <path d="M2 9 H8" />}
      {kind === "restore" && <path d="M3 3 V1.500 H10 V7 H8 M1 5 H8 V10 H1Z" strokeWidth="1.500" />}
      {kind === "close" && <path d="M1.500 2 L9 9.500 M9 2 L1.500 9.500" />}
    </svg>
  );
}

export default function App() {
  return (
    <AppWindow>
      <GlobalStyle />
      <TitleBar>
        <SmallIcon viewBox="0 0 48 48" aria-hidden="true">
          <rect x="0" y="0" width="48" height="48" fill="#203838" />
          <rect x="3" y="3" width="42" height="24" fill="#30c8c0" />
          <path d="M4 24 L12 20 L18 6 L22 20 L30 4 L34 20 L44 22" stroke="#000" strokeWidth="4" />
          <path d="M2 46 V32 H16 V46Z M20 46 V34 H30" stroke="#e8f0f0" strokeWidth="4" />
          <circle cx="32" cy="36" r="8" fill="#60e8e0" />
        </SmallIcon>
        <WindowTitle>{"Spectra Analysis - [View 6 <Memory-6>]"}</WindowTitle>
        <CaptionButtons>
          <CaptionButton type="button" aria-label="Minimize"><ControlGlyph kind="min" color="#fff" /></CaptionButton>
          <CaptionButton type="button" aria-label="Restore"><ControlGlyph kind="restore" color="#fff" /></CaptionButton>
          <CaptionButton type="button" aria-label="Close" $close><ControlGlyph kind="close" color="#fff" /></CaptionButton>
        </CaptionButtons>
      </TitleBar>
      <MenuBar aria-label="Main menu">
        <SmallIcon viewBox="0 0 48 48" aria-hidden="true">
          <rect x="1" y="6" width="46" height="38" fill="#fff" stroke="#181850" strokeWidth="3" />
          <path d="M2 8 H46" stroke="#101060" strokeWidth="6" />
          <path d="M5 38 L12 34 L16 20 L20 36 L28 20 L32 34 L38 16 L42 36" stroke="#ff0000" strokeWidth="4" />
        </SmallIcon>
        <MenuItems>
          {menus.map((name) => (
            <MenuItem key={name} type="button"><u>{name[0]}</u>{name.slice(1)}</MenuItem>
          ))}
        </MenuItems>
        <ChildButtons>
          <ChildButton type="button" aria-label="Minimize view"><SmallControlGlyph kind="min" /></ChildButton>
          <ChildButton type="button" aria-label="Restore view"><SmallControlGlyph kind="restore" /></ChildButton>
          <ChildButton type="button" aria-label="Close view"><SmallControlGlyph kind="close" /></ChildButton>
        </ChildButtons>
      </MenuBar>
      <ToolRow>
        <ToolBar role="toolbar" aria-label="Standard">
          <Grip $width={11} />
          <Tools items={fileTools} width={56} />
          <Separator />
          <Tools items={printTools} width={58} />
          <Separator />
          <Tools items={helpTools} width={28} />
        </ToolBar>
        <ToolBar role="toolbar" aria-label="View">
          <Grip $width={9} />
          <Tools items={axisTools} width={56} />
          <Separator />
          <Tools items={rangeTools} width={112} />
          <Separator />
          <Tools items={panTools} width={86} />
          <Separator />
          <Tools items={pickTools} width={86} />
          <Separator />
          <Tools items={splitTools} width={28} />
        </ToolBar>
        <ToolBar role="toolbar" aria-label="Processing">
          <Grip $width={8} />
          <Tools items={processTools} width={676} />
        </ToolBar>
      </ToolRow>
      <ToolRow>
        <ToolBar role="toolbar" aria-label="Style">
          <Grip $width={7} />
          <Tools items={styleTools} width={140} />
          <Separator />
          <Tools items={[t("peakMenu", "Peak display")]} width={30} />
          <Separator />
          <Tools items={[t("viewPeaks", "View peaks")]} width={28} />
          <Separator />
          <Tools items={[t("info", "Information")]} width={28} />
        </ToolBar>
      </ToolRow>
      <Pane aria-label="Spectrum view">
        <SpectrumChart />
      </Pane>
    </AppWindow>
  );
}
